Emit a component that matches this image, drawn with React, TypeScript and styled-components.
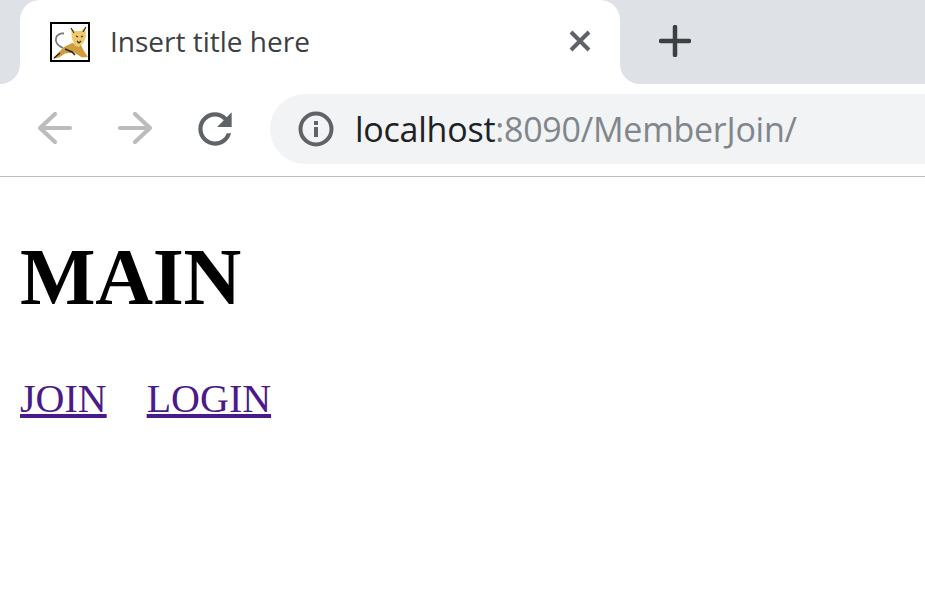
import styled, { createGlobalStyle } from "styled-components";

const GRAY = "#dee1e6";

export default function App() {
  return (
    <>
      <GlobalStyle />
      <TabStrip>
        <StripEdge $side="left" />
        <TabSlot>
          <Tab>
            <Favicon>
              <svg width="36" height="36" viewBox="0 0 36 36">
                <path d="M11 24C6 22 3 18 4 14c.6-3 4-5 8-4.500" fill="none" stroke="#777" strokeWidth="1.800" />
                <path d="M1 35l6-7 5-5 8-4 9 2 3 6 4 6-6 .5-8-5-9 1-6 4z" fill="#cf9d3e" />
                <path d="M19 4l4 3h6l4-4 1 9-2 6-5 5-4-1-3-7z" fill="#edcb6c" />
                <path d="M19 4l3 5M34 3l-3 5M24 12l2 1M29 13l2-1M25 17l2 2 2-2" fill="none" stroke="#3a2c10" strokeWidth="1.100" />
                <path d="M13 25l7 3 3 3M2 34l6-5" fill="none" stroke="#2a2212" strokeWidth="1.500" />
              </svg>
            </Favicon>
            <TabTitle>Insert title here</TabTitle>
            <CloseIcon width="24" height="24" viewBox="0 0 24 24">
              <path d="M3 3l18 18M21 3L3 21" fill="none" stroke="#5f6368" strokeWidth="4" />
            </CloseIcon>
          </Tab>
        </TabSlot>
        <StripEdge $side="right">
          <svg width="32" height="32" viewBox="0 0 32 32">
            <path d="M16 2v28M2 16h28" fill="none" stroke="#3c4043" strokeWidth="4.500" strokeLinecap="round" />
          </svg>
        </StripEdge>
      </TabStrip>
      <Toolbar>
        <NavButton>
          <svg width="40" height="40" viewBox="0 0 40 40">
            <path d="M35 19H5M20 5L5 19l15 14" fill="none" stroke="#bcbcbc" strokeWidth="4.200" strokeLinecap="round" strokeLinejoin="round" />
          </svg>
        </NavButton>
        <NavButton>
          <svg width="40" height="40" viewBox="0 0 40 40">
            <path d="M5 19h30M20 5l15 14-15 14" fill="none" stroke="#bcbcbc" strokeWidth="4.200" strokeLinecap="round" strokeLinejoin="round" />
          </svg>
        </NavButton>
        <NavButton>
          <svg width="50" height="50" viewBox="0 0 24 24">
            <path
              d="M17.650 6.350A7.958 7.958 0 0 0 12 4c-4.420 0-7.990 3.580-7.990 8s3.570 8 7.990 8c3.730 0 6.840-2.550 7.730-6h-2.080A5.990 5.990 0 0 1 12 18c-3.310 0-6-2.690-6-6s2.690-6 6-6c1.660 0 3.140.69 4.220 1.780L13 11h7V4l-2.350 2.350z"
              fill="#5f6368"
            />
          </svg>
        </NavButton>
        <Omnibox>
          <svg width="36" height="36" viewBox="0 0 36 36">
            <circle cx="18" cy="18" r="15.500" fill="none" stroke="#5f6368" strokeWidth="4" />
            <path d="M16 16h4v10h-4zM16 10h4v4h-4z" fill="#5f6368" />
          </svg>
          <Url>
            localhost<UrlPath>:8090/MemberJoin/</UrlPath>
          </Url>
        </Omnibox>
      </Toolbar>
      <Page>
        <Heading>MAIN</Heading>
        <Links>
          <PageLink href="#">JOIN</PageLink>
          <PageLink href="#">LOGIN</PageLink>
        </Links>
      </Page>
    </>
  );
}

const GlobalStyle = createGlobalStyle`
  html, body {
    margin: 0;
    background: #fff;
    overflow: hidden;
  }
`;

const TabStrip = styled.div`
  display: flex;
  height: 84px;
  background: #fff;
`;

const StripEdge = styled.div<{ $side: "left" | "right" }>`
  display: flex;
  align-items: center;
  background: ${GRAY};
  ${(p) =>
    p.$side === "left"
      ? "width: 20px; border-bottom-right-radius: 20px;"
      : "flex: 1; padding-left: 39px; border-bottom-left-radius: 20px; padding-bottom: 2px;"}
`;

const TabSlot = styled.div`
  width: 600px;
  background: ${GRAY};
`;

const Tab = styled.div`
  display: flex;
  align-items: center;
  height: 100%;
  padding: 0 28px 2px 30px;
  box-sizing: border-box;
  background: #fff;
  border-radius: 20px 20px 0 0;
`;

const Favicon = styled.div`
  display: flex;
  width: 36px;
  height: 36px;
  margin-top: 2px;
  border: 2px solid #000;
  background: #fff;
  overflow: hidden;
`;

const TabTitle = styled.span`
  flex: 1;
  margin-left: 20px;
  font-family: "Open Sans", sans-serif;
  font-size: 28px;
  color: #3c4043;
`;

const CloseIcon = styled.svg`
  flex: none;
`;

const Toolbar = styled.div`
  display: flex;
  align-items: center;
  height: 90px;
  padding: 0 0 2px 30px;
  gap: 30px;
  border-bottom: 1px solid #bdbdbd;
`;

const NavButton = styled.div`
  display: flex;
  align-items: center;
  justify-content: center;
  width: 50px;
  height: 50px;
`;

const Omnibox = styled.div`
  display: flex;
  flex: 1;
  align-items: center;
  height: 70px;
  padding-left: 28px;
  gap: 21px;
  background: #f1f3f4;
  border-radius: 35px 0 0 35px;
`;

const Url = styled.span`
  font-family: "Open Sans", sans-serif;
  font-size: 34px;
  letter-spacing: -0.24px;
  color: #202124;
`;

const UrlPath = styled.span`
  color: #80868b;
`;

const Page = styled.main`
  padding: 0 20px;
  font-family: "Liberation Serif", serif;
`;

const Heading = styled.h1`
  margin: 54px 0 0;
  font-size: 80px;
  line-height: 92px;
  font-weight: 700;
  letter-spacing: -0.3px;
  color: #000;
`;

const Links = styled.div`
  display: flex;
  gap: 40px;
  margin-top: 53px;
`;

const PageLink = styled.a`
  font-size: 40px;
  line-height: 46px;
  color: #4b1a8a;
  text-decoration: underline;
`;
